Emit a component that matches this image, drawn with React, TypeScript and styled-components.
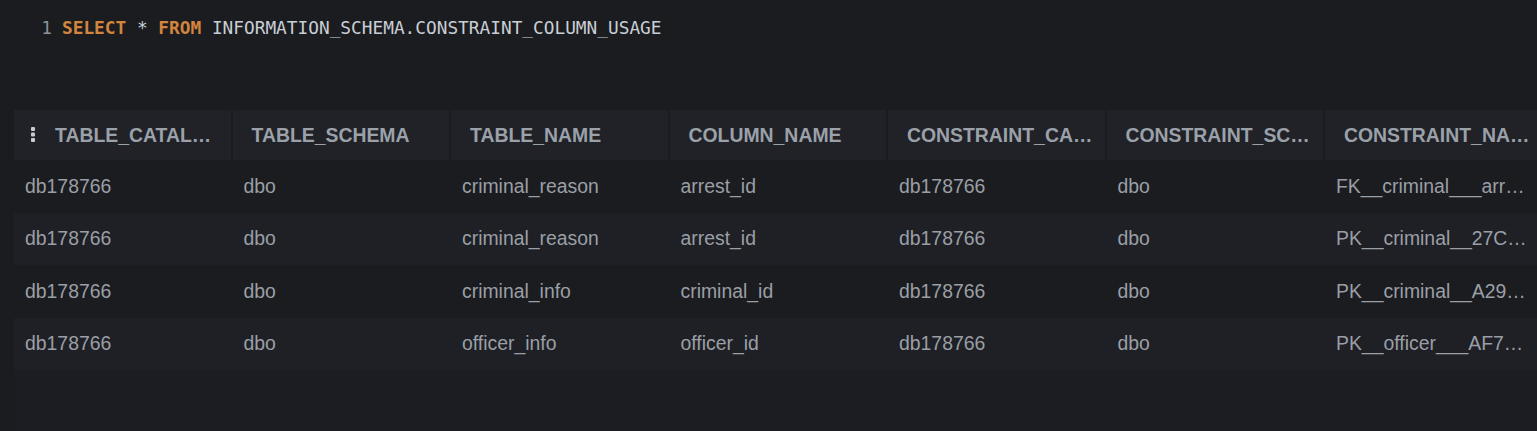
import React from "react";
import styled, { createGlobalStyle } from "styled-components";

const Global = createGlobalStyle`
  html, body { margin: 0; padding: 0; background: #1b1c20; }
  body { width: 1537px; height: 431px; overflow: hidden; }
`;

const Page = styled.div`
  width: 1537px;
  height: 431px;
  background: #1b1c20;
  display: flex;
  flex-direction: column;
  overflow: hidden;
`;

const Editor = styled.div`
  height: 110px;
  display: flex;
  align-items: flex-start;
  padding-top: 17px;
  box-sizing: border-box;
  font-family: "DejaVu Sans Mono", monospace;
  font-size: 17.8px;
  line-height: 22px;
  color: #c9ced5;
  white-space: pre;
`;

const LineNo = styled.span`
  width: 52px;
  text-align: right;
  padding-right: 10px;
  color: #8d9198;
`;

const Kw = styled.span`
  color: #d3843d;
  font-weight: bold;
`;

const Grid = styled.div`
  margin-left: 14px;
  flex: 1;
  display: flex;
  flex-direction: column;
  background: #1b1c21;
  font-family: "Liberation Sans", Arial, sans-serif;
`;

const HeaderRow = styled.div`
  display: grid;
  grid-template-columns: repeat(7, 218.5px);
  height: 50px;
  background: #1b1c20;
`;

const HeaderCell = styled.div<{ $first?: boolean }>`
  background: #212228;
  border-right: 2px solid #1b1c20;
  display: flex;
  align-items: center;
  gap: 19px;
  padding-left: ${(p) => (p.$first ? "16px" : "19px")};
  font-size: 19.4px;
  font-weight: bold;
  color: #9ba1a9;
  white-space: nowrap;
`;

const Row = styled.div<{ $alt: boolean }>`
  display: grid;
  grid-template-columns: repeat(7, 218.5px);
  height: 52.5px;
  background: ${(p) => (p.$alt ? "#1f2025" : "#1b1c20")};
`;

const Cell = styled.div`
  display: flex;
  align-items: center;
  padding-left: 11px;
  font-size: 19.4px;
  color: #9a9fa6;
  white-space: nowrap;
`;

const Filler = styled.div`
  flex: 1;
  background: #1c1d22;
`;

const DotsIcon = () => (
  <svg width="6" height="16" viewBox="0 0 6 16">
    <rect x="1" y="0" width="4" height="4" rx="1" fill="#c8ccd2" />
    <rect x="1" y="5.5" width="4" height="4" rx="1" fill="#c8ccd2" />
    <rect x="1" y="11" width="4" height="4" rx="1" fill="#c8ccd2" />
  </svg>
);

const headers = [
  "TABLE_CATAL…",
  "TABLE_SCHEMA",
  "TABLE_NAME",
  "COLUMN_NAME",
  "CONSTRAINT_CA…",
  "CONSTRAINT_SC…",
  "CONSTRAINT_NA…",
];

const rows = [
  ["db178766", "dbo", "criminal_reason", "arrest_id", "db178766", "dbo", "FK__criminal___arr…"],
  ["db178766", "dbo", "criminal_reason", "arrest_id", "db178766", "dbo", "PK__criminal__27C…"],
  ["db178766", "dbo", "criminal_info", "criminal_id", "db178766", "dbo", "PK__criminal__A29…"],
  ["db178766", "dbo", "officer_info", "officer_id", "db178766", "dbo", "PK__officer___AF7…"],
];

export default function App() {
  return (
    <Page>
      <Global />
      <Editor>
        <LineNo>1</LineNo>
        <span>
          <Kw>SELECT</Kw> * <Kw>FROM</Kw> INFORMATION_SCHEMA.CONSTRAINT_COLUMN_USAGE
        </span>
      </Editor>
      <Grid>
        <HeaderRow>
          {headers.map((h, i) => (
            <HeaderCell key={h} $first={i === 0}>
              {i === 0 && <DotsIcon />}
              <span>{h}</span>
            </HeaderCell>
          ))}
        </HeaderRow>
        {rows.map((r, ri) => (
          <Row key={ri} $alt={ri % 2 === 1}>
            {r.map((c, ci) => (
              <Cell key={ci}>{c}</Cell>
            ))}
          </Row>
        ))}
        <Filler />
      </Grid>
    </Page>
  );
}
